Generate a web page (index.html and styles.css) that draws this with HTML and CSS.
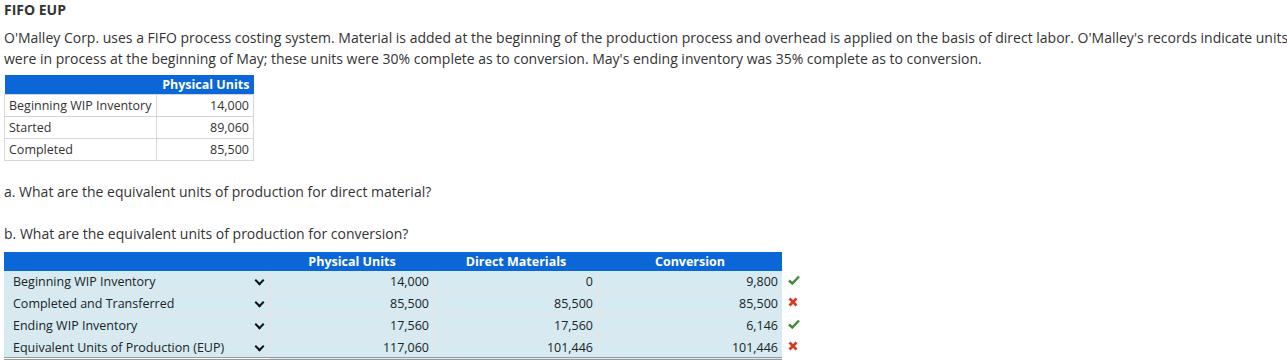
FILE: index.html
```html
<!DOCTYPE html>
<html lang="en">
<head>
    <meta charset="UTF-8">
    <title>FIFO EUP</title>
    <link rel="stylesheet" href="styles.css">
</head>
<body>
    <div class="question">
        <h4 class="title">FIFO EUP</h4>
        <p class="intro">O'Malley Corp. uses a FIFO process costing system. Material is added at the beginning of the production process and overhead is applied on the basis of direct labor. O'Malley's records indicate units were in process at the beginning of May; these units were 30% complete as to conversion. May's ending inventory was 35% complete as to conversion.</p>

        <table class="data-table">
            <thead>
                <tr><th></th><th>Physical Units</th></tr>
            </thead>
            <tbody>
                <tr><td class="label">Beginning WIP Inventory</td><td class="num">14,000</td></tr>
                <tr><td class="label">Started</td><td class="num">89,060</td></tr>
                <tr><td class="label">Completed</td><td class="num">85,500</td></tr>
            </tbody>
        </table>

        <p class="part part-a">a. What are the equivalent units of production for direct material?</p>
        <p class="part part-b">b. What are the equivalent units of production for conversion?</p>

        <div class="answer">
            <table class="eup-table">
                <thead>
                    <tr>
                        <th class="col-label"></th>
                        <th class="col-num">Physical Units</th>
                        <th class="col-num">Direct Materials</th>
                        <th class="col-conv">Conversion</th>
                    </tr>
                </thead>
                <tbody>
                    <tr>
                        <td class="pick">Beginning WIP Inventory <span class="chev"></span></td>
                        <td>14,000</td><td>0</td><td>9,800</td>
                    </tr>
                    <tr>
                        <td class="pick">Completed and Transferred <span class="chev"></span></td>
                        <td>85,500</td><td>85,500</td><td>85,500</td>
                    </tr>
                    <tr>
                        <td class="pick">Ending WIP Inventory <span class="chev"></span></td>
                        <td>17,560</td><td>17,560</td><td>6,146</td>
                    </tr>
                    <tr class="total">
                        <td class="pick">Equivalent Units of Production (EUP) <span class="chev"></span></td>
                        <td>117,060</td><td>101,446</td><td>101,446</td>
                    </tr>
                </tbody>
            </table>
            <div class="marks">
                <div class="mark"><svg width="12" height="10" viewBox="0 0 12 10"><path d="M1 5.5 L4.3 8.5 L11 1.5" fill="none" stroke="#3f8a34" stroke-width="2.4"/></svg></div>
                <div class="mark"><svg width="10" height="10" viewBox="0 0 10 10"><path d="M1.5 1.5 L8.5 8.5 M8.5 1.5 L1.5 8.5" fill="none" stroke="#d9381e" stroke-width="2.6"/></svg></div>
                <div class="mark"><svg width="12" height="10" viewBox="0 0 12 10"><path d="M1 5.5 L4.3 8.5 L11 1.5" fill="none" stroke="#3f8a34" stroke-width="2.4"/></svg></div>
                <div class="mark"><svg width="10" height="10" viewBox="0 0 10 10"><path d="M1.5 1.5 L8.5 8.5 M8.5 1.5 L1.5 8.5" fill="none" stroke="#d9381e" stroke-width="2.6"/></svg></div>
            </div>
        </div>
    </div>
</body>
</html>
```

FILE: styles.css
```css
body {
    font-family: 'Open Sans', sans-serif;
    color: #333;
    margin: 0;
    padding: 0;
    overflow-x: hidden;
}
.question {
    padding: 0 0 0 4px;
}
.title {
    font-size: 14px;
    font-weight: bold;
    margin: 0;
    padding-top: 2px;
    line-height: 16px;
}
.intro {
    font-size: 14px;
    line-height: 21px;
    margin: 9px -14px 6px 0;
}
/* given data table */
.data-table {
    border-collapse: collapse;
    font-size: 12.5px;
    color: #333;
}
.data-table th {
    background: #0b66d8;
    color: white;
    font-weight: bold;
    height: 19px;
    padding: 0 4px;
    text-align: right;
}
.data-table td {
    border: 1px solid #d6d6d6;
    height: 21px;
    padding: 0 4px;
}
.data-table td.label {
    width: 143px;
}
.data-table td.num {
    width: 88px;
    text-align: right;
}
.part {
    font-size: 14px;
    margin: 0;
    line-height: 18px;
}
.part-a {
    margin-top: 22px;
}
.part-b {
    margin-top: 24px;
}
/* answer table */
.answer {
    display: flex;
    align-items: flex-end;
    margin-top: 9px;
}
.eup-table {
    border-collapse: collapse;
    font-size: 12.5px;
    color: #222;
    border-bottom: 3px double #999;
}
.eup-table th {
    background: #0b66d8;
    color: white;
    font-weight: bold;
    height: 19px;
    padding: 0;
    text-align: center;
}
.eup-table .col-label { width: 266px; }
.eup-table .col-num { width: 164px; }
.eup-table .col-conv { width: 184px; }
.eup-table td {
    background: #d5eaf1;
    border: 2px solid #e2e6e8;
    border-top: none;
    height: 20px;
    padding: 0 4px;
    text-align: right;
}
.eup-table td:first-child {
    border-left: none;
}
.eup-table td:last-child {
    border-right: none;
}
.eup-table td.pick {
    text-align: left;
    padding-left: 9px;
    padding-right: 10px;
    position: relative;
}
.chev {
    position: absolute;
    right: 6px;
    top: 6px;
    width: 5px;
    height: 5px;
    border-right: 2.5px solid #111;
    border-bottom: 2.5px solid #111;
    transform: rotate(45deg);
}
.eup-table tr.total td {
    border-top: 1px solid #555;
}
.eup-table tr.total td.pick {
    border-top: none;
}
.marks {
    display: flex;
    flex-direction: column;
    padding-left: 6px;
    padding-bottom: 3px;
}
.mark {
    height: 22px;
    display: flex;
    align-items: center;
}
```
